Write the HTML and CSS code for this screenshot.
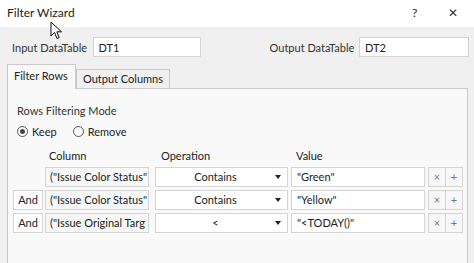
FILE: index.html
```html
<!DOCTYPE html>
<html lang="en">
<head>
  <meta charset="UTF-8">
  <title>Filter Wizard</title>
  <link rel="stylesheet" href="styles.css">
</head>
<body>
  <div class="window">
    <div class="titlebar">
      <span class="title">Filter Wizard</span>
      <span class="help">?</span>
      <span class="close">&#x2715;</span>
    </div>
    <div class="content">
      <div class="io-row">
        <label class="io-label">Input DataTable</label>
        <input class="io-input in-input" type="text" value="DT1">
        <label class="io-label out-label">Output DataTable</label>
        <input class="io-input out-input" type="text" value="DT2">
      </div>

      <div class="tabs">
        <div class="tab active">Filter Rows</div>
        <div class="tab">Output Columns</div>
      </div>

      <div class="panel">
        <div class="mode-title">Rows Filtering Mode</div>
        <div class="radios">
          <span class="radio checked"></span><span class="radio-label">Keep</span>
          <span class="radio"></span><span class="radio-label">Remove</span>
        </div>

        <div class="row head">
          <div class="c-and"></div>
          <div class="c-col">Column</div>
          <div class="c-op">Operation</div>
          <div class="c-val">Value</div>
        </div>

        <div class="row">
          <div class="c-and blank"></div>
          <div class="c-col cell grey">("Issue Color Status"</div>
          <div class="c-op cell select"><span class="sel-text">Contains</span><span class="arrow"></span></div>
          <div class="c-val cell">"Green"</div>
          <div class="btn del">&#x00D7;</div>
          <div class="btn add">+</div>
        </div>

        <div class="row">
          <div class="c-and cell">And</div>
          <div class="c-col cell grey">("Issue Color Status"</div>
          <div class="c-op cell select"><span class="sel-text">Contains</span><span class="arrow"></span></div>
          <div class="c-val cell">"Yellow"</div>
          <div class="btn del">&#x00D7;</div>
          <div class="btn add">+</div>
        </div>

        <div class="row">
          <div class="c-and cell">And</div>
          <div class="c-col cell grey">("Issue Original Targ</div>
          <div class="c-op cell select"><span class="sel-text">&lt;</span><span class="arrow"></span></div>
          <div class="c-val cell">"&lt;TODAY()"</div>
          <div class="btn del">&#x00D7;</div>
          <div class="btn add">+</div>
        </div>
      </div>
    </div>

    <!-- mouse pointer over the title bar -->
    <svg class="cursor" width="13" height="19" viewBox="0 0 13 19">
      <path d="M1 1 L1 15 L4.5 11.5 L7 17.5 L9.2 16.6 L6.8 10.8 L11.5 10.8 Z" fill="#fff" stroke="#111" stroke-width="1" stroke-linejoin="round"/>
    </svg>
  </div>
</body>
</html>
```

FILE: styles.css
```css
body {
  margin: 0;
  font-family: Lato, "Noto Sans", sans-serif;
  font-size: 11px;
  color: #222;
  background-color: #f0f0f0;
  overflow: hidden;
}

.window {
  position: relative;
  width: 474px;
  height: 263px;
  overflow: hidden;
}

.titlebar {
  height: 27px;
  background-color: #fff;
  display: flex;
  align-items: center;
  white-space: nowrap;
  font-size: 12px;
}

.title {
  margin-left: 7px;
  margin-top: -2px;
  flex: 1;
}

.help {
  width: 10px;
  margin-right: 26px;
  margin-top: -2px;
}

.close {
  width: 14px;
  margin-right: 12px;
  margin-top: -2px;
  color: #333;
}

.content {
  padding: 0 5px 0 7px;
}

.io-row {
  display: flex;
  align-items: center;
  height: 20px;
  margin-top: 10px;
  white-space: nowrap;
}

.io-label {
  margin-left: 5px;
  width: 81px;
  color: #333;
}

.out-label {
  margin-left: 69px;
  width: 90px;
}

.io-input {
  box-sizing: border-box;
  height: 20px;
  border: 1px solid #d4d4d4;
  background-color: #fff;
  font-family: inherit;
  font-size: 11px;
  color: #222;
  padding: 0 5px;
  margin: 0;
}

.in-input {
  width: 108px;
}

.out-input {
  width: 110px;
}

.tabs {
  display: flex;
  align-items: flex-end;
  height: 25px;
  margin-top: 6px;
  white-space: nowrap;
}

.tab {
  box-sizing: border-box;
  height: 19px;
  padding: 0 6px;
  border: 1px solid #c9c9c9;
  border-bottom: none;
  background-color: #f0f0f0;
  line-height: 17px;
  color: #222;
}

.tab.active {
  height: 25px;
  line-height: 22px;
  background-color: #f9f9f9;
  width: 69px;
  padding: 0 6px;
  margin-bottom: -1px;
  position: relative;
  z-index: 1;
}

.panel {
  width: 461px;
  height: 190px;
  box-sizing: border-box;
  background-color: #f9f9f9;
  border: 1px solid #c9c9c9;
  padding: 13px 0 0 5px;
}

.mode-title {
  margin-left: 4px;
  height: 18px;
  line-height: 18px;
  color: #333;
}

.radios {
  display: flex;
  align-items: center;
  height: 16px;
  margin-top: 3px;
  margin-left: 4px;
}

.radio {
  box-sizing: border-box;
  width: 11px;
  height: 11px;
  border: 1px solid #555;
  border-radius: 50%;
  background-color: #fff;
  margin-right: 4px;
  position: relative;
}

.radio.checked::after {
  content: "";
  position: absolute;
  left: 2px;
  top: 2px;
  width: 5px;
  height: 5px;
  border-radius: 50%;
  background-color: #444;
}

.radio-label {
  margin-right: 16px;
  color: #222;
}

.row {
  display: flex;
  height: 20px;
  margin-bottom: 3px;
  white-space: nowrap;
}

.row.head {
  margin-top: 7px;
  line-height: 20px;
  margin-bottom: 1px;
}

.cell {
  box-sizing: border-box;
  border: 1px solid #d5d5d5;
  background-color: #fff;
  line-height: 18px;
  overflow: hidden;
}

.c-and {
  width: 30px;
  margin-right: 2px;
  box-sizing: border-box;
  text-align: center;
}

.c-col {
  width: 104px;
  margin-right: 6px;
  padding-left: 4px;
  box-sizing: border-box;
}

.grey {
  background-color: #f7f7f7;
}

.c-op {
  width: 133px;
  margin-right: 3px;
  padding-left: 6px;
  box-sizing: border-box;
}

.select {
  display: flex;
  align-items: center;
  padding: 0 6px 0 0;
}

.sel-text {
  flex: 1;
  text-align: center;
}

.arrow {
  width: 0;
  height: 0;
  border-left: 3.5px solid transparent;
  border-right: 3.5px solid transparent;
  border-top: 4px solid #222;
}

.c-val {
  width: 134px;
  margin-right: 3px;
  padding-left: 5px;
  box-sizing: border-box;
}

.btn {
  box-sizing: border-box;
  width: 18px;
  height: 20px;
  border: 1px solid #d5d5d5;
  background-color: #f7f7f7;
  text-align: center;
  line-height: 17px;
  color: #777;
  font-size: 11px;
}

.btn.add {
  border-left: none;
  width: 17px;
}

.cursor {
  position: absolute;
  left: 50px;
  top: 21px;
}
```
